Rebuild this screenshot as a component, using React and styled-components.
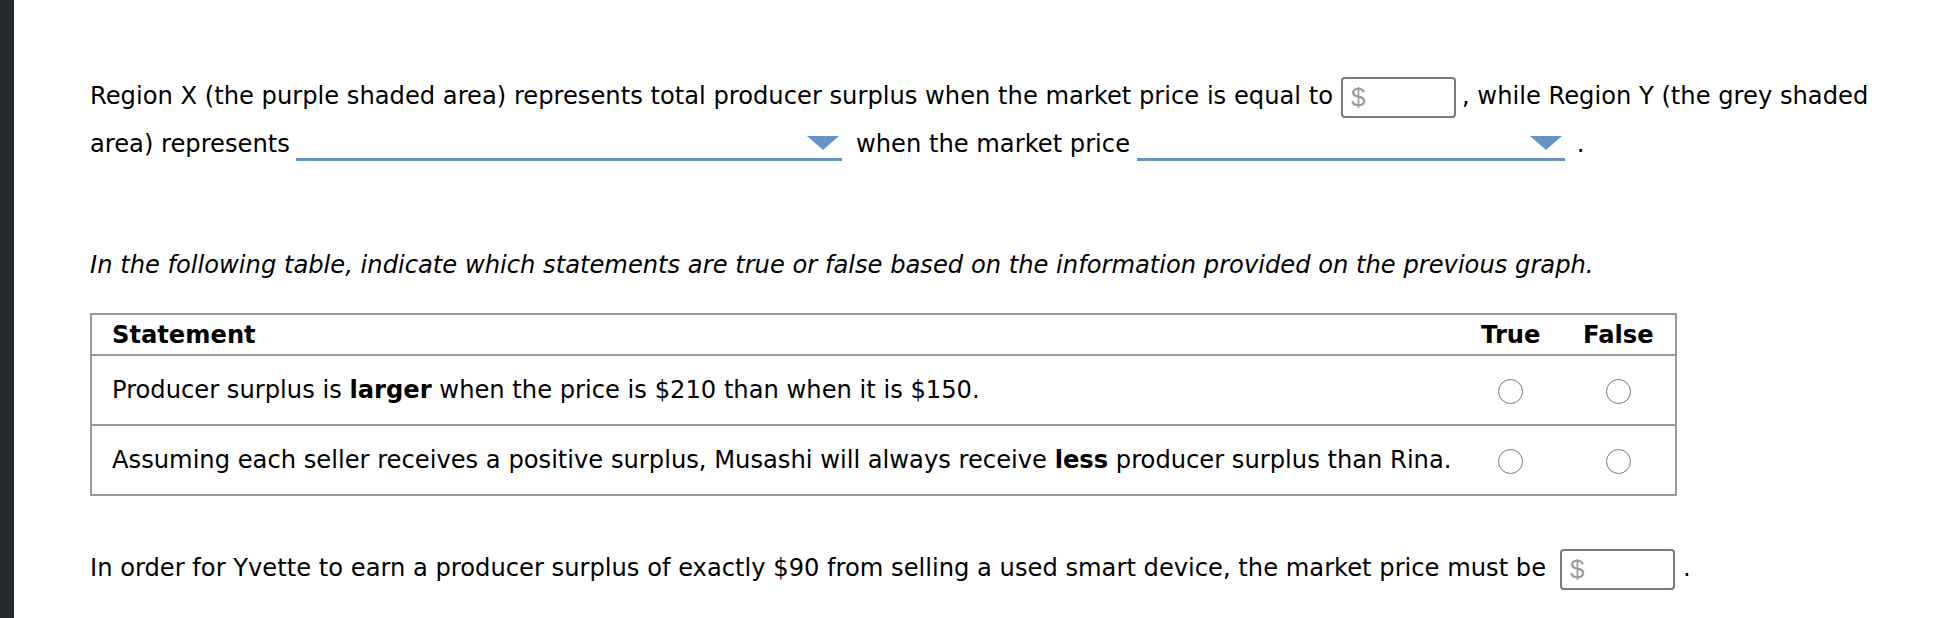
import React from 'react';
import styled, { createGlobalStyle } from 'styled-components';

const GlobalStyle = createGlobalStyle`
  html, body {
    margin: 0;
    padding: 0;
    background: #fff;
  }
  body {
    font-family: "DejaVu Sans", Verdana, sans-serif;
    color: #000;
  }
`;

const Page = styled.div`
  display: flex;
  min-height: 618px;
`;

const SideBar = styled.div`
  width: 14px;
  flex-shrink: 0;
  background: #25282c;
`;

const Content = styled.div`
  flex: 1;
  padding: 72px 46px 0 76px;
`;

const Para = styled.p`
  margin: ${({ mt }) => mt || 0} 0 0 0;
  font-size: 24.2px;
  line-height: 48px;
`;

const Italic = styled.p`
  margin: 82px 0 0 0;
  font-size: 24.2px;
  line-height: 30px;
  font-style: italic;
`;

const MoneyBox = styled.span`
  display: inline-flex;
  align-items: center;
  box-sizing: border-box;
  width: 115px;
  height: 41px;
  padding-left: 8px;
  margin: ${({ m }) => m || '0 4px'};
  border: 2px solid #7a7a7a;
  border-radius: 4px;
  vertical-align: middle;
  color: #999;
  font-family: "Liberation Sans", Arial, sans-serif;
  font-size: 26px;
`;

const Dropdown = styled.span`
  position: relative;
  display: inline-block;
  box-sizing: border-box;
  width: ${({ w }) => w}px;
  height: 26px;
  margin: ${({ m }) => m || '0 6px'};
  border-bottom: 3px solid #6694c5;
  vertical-align: -9px;
`;

const Caret = styled.svg`
  position: absolute;
  right: 3px;
  bottom: 8px;
`;

const Table = styled.table`
  margin-top: 33px;
  width: 1587px;
  border-collapse: collapse;
  border: 2px solid #999;
  font-size: 24.2px;
`;

const Th = styled.th`
  height: 39px;
  padding: ${({ pad }) => pad || '0 21px'};
  text-align: ${({ align }) => align || 'center'};
  font-weight: bold;
  border-bottom: 2px solid #999;
  white-space: nowrap;
`;

const Td = styled.td`
  height: 68px;
  padding: ${({ pad }) => pad || '0 21px'};
  text-align: ${({ align }) => align || 'center'};
  vertical-align: middle;
  border-bottom: 2px solid #999;
  white-space: nowrap;
`;

const Radio = styled.span`
  display: inline-block;
  box-sizing: border-box;
  width: 25px;
  height: 25px;
  border: 1.5px solid #7a7a7a;
  border-radius: 50%;
  vertical-align: middle;
`;

const DropdownField = ({ w, m }) => (
  <Dropdown w={w} m={m}>
    <Caret width="32" height="14" viewBox="0 0 32 14">
      <polygon points="0,0 32,0 16,14" fill="#6694c5" />
    </Caret>
  </Dropdown>
);

const rows = [
  <>Producer surplus is <b>larger</b> when the price is $210 than when it is $150.</>,
  <>Assuming each seller receives a positive surplus, Musashi will always receive <b>less</b> producer surplus than Rina.</>,
];

export default function App() {
  return (
    <>
      <GlobalStyle />
      <Page>
        <SideBar />
        <Content>
          <Para>
            Region X (the purple shaded area) represents total producer surplus when the market price is equal to
            <MoneyBox m="0 6px 0 8px">$</MoneyBox>, while Region Y (the grey shaded area) represents
            <DropdownField w={546} m="0 14px 0 6px" />
            when the market price
            <DropdownField w={428} m="0 4px 0 7px" /> .
          </Para>
          <Italic>
            In the following table, indicate which statements are true or false based on the information provided on the previous graph.
          </Italic>
          <Table>
            <thead>
              <tr>
                <Th align="left" pad="0 0 0 20px">Statement</Th>
                <Th>True</Th>
                <Th>False</Th>
              </tr>
            </thead>
            <tbody>
              {rows.map((r, i) => (
                <tr key={i}>
                  <Td align="left" pad="0 0 0 20px">{r}</Td>
                  <Td><Radio /></Td>
                  <Td><Radio /></Td>
                </tr>
              ))}
            </tbody>
          </Table>
          <Para mt="48px">
            In order for Yvette to earn a producer surplus of exactly $90 from selling a used smart device, the market price must be
            <MoneyBox m="0 8px 0 14px">$</MoneyBox>.
          </Para>
        </Content>
      </Page>
    </>
  );
}
